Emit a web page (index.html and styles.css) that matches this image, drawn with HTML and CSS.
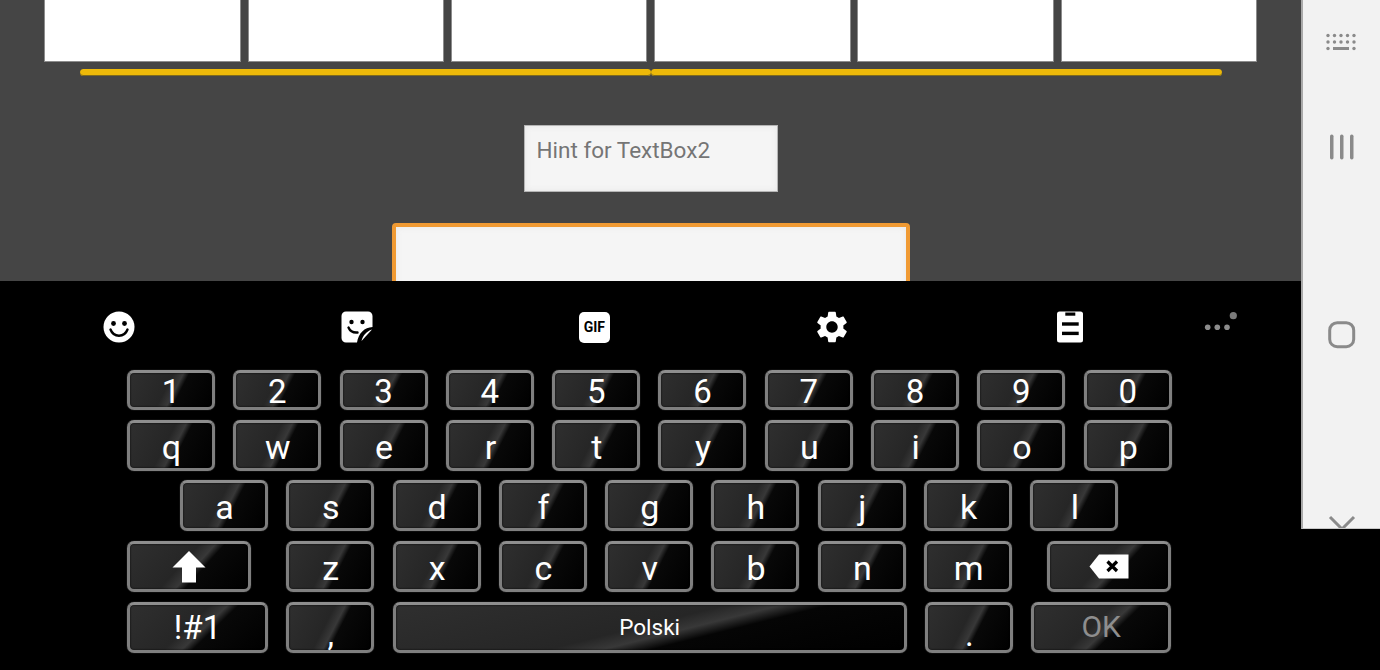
FILE: index.html
```html
<!DOCTYPE html>
<html lang="pl">
<head>
<meta charset="utf-8">
<title>Keyboard</title>
<link rel="stylesheet" href="styles.css">
</head>
<body>
<div class="screen">
  <div class="main">
    <section class="app">
      <div class="tiles">
        <div class="tile"></div><div class="tile"></div><div class="tile"></div>
        <div class="tile"></div><div class="tile"></div><div class="tile"></div>
      </div>
      <div class="slider"><div class="seg"></div><div class="seg"></div></div>
      <div class="hintbox">Hint for TextBox2</div>
      <div class="focusbox"></div>
    </section>
    <section class="keyboard">
      <div class="toolbar">
        <div class="tool">
          <svg width="32" height="32" viewBox="0 0 32 32"><circle cx="16" cy="16" r="15.5" fill="#fff"/><circle cx="10.5" cy="12.5" r="2.4" fill="#000"/><circle cx="21.5" cy="12.5" r="2.4" fill="#000"/><path d="M7.5 18.5c1.6 4.2 4.8 6.2 8.500 6.200s6.900-2 8.500-6.200" fill="none" stroke="#000" stroke-width="2.400" stroke-linecap="round"/></svg>
        </div>
        <div class="tool">
          <svg width="32" height="32" viewBox="0 0 32 32"><path d="M5 0.500h22a4.500 4.500 0 0 1 4.500 4.500v11c-8 .5-14 6-15.500 15.500H5a4.500 4.500 0 0 1-4.500-4.500V5A4.500 4.500 0 0 1 5 .5z" fill="#fff"/><path d="M31 18.500 20.500 30c1-5 4.500-9.500 10.500-11.500z" fill="#fff"/><circle cx="10.500" cy="11" r="2.200" fill="#000"/><circle cx="21.500" cy="11" r="2.200" fill="#000"/><path d="M7.500 16.500c1.500 3.500 4 5.500 9 5" fill="none" stroke="#000" stroke-width="2.400" stroke-linecap="round"/></svg>
        </div>
        <div class="tool"><div class="gif">GIF</div></div>
        <div class="tool">
          <svg width="38" height="38" viewBox="0 0 24 24"><path fill="#fff" d="M19.140 12.940c.04-.3.060-.61.060-.94 0-.32-.020-.64-.070-.94l2.030-1.580c.18-.14.230-.41.120-.61l-1.920-3.320c-.12-.22-.37-.29-.59-.22l-2.390.96c-.5-.38-1.030-.7-1.620-.94l-.36-2.540c-.04-.24-.24-.41-.48-.41h-3.840c-.24 0-.43.170-.47.410l-.36 2.540c-.59.240-1.130.57-1.620.94l-2.390-.96c-.22-.08-.47 0-.59.220L2.740 8.870c-.12.210-.08.470.12.610l2.030 1.580c-.05.3-.09.630-.09.940s.020.640.070.940l-2.030 1.580c-.18.140-.23.410-.12.610l1.920 3.320c.12.220.37.290.59.220l2.390-.96c.5.380 1.030.7 1.620.94l.36 2.540c.05.240.24.410.48.410h3.840c.24 0 .44-.170.47-.41l.36-2.540c.59-.24 1.130-.56 1.620-.94l2.390.96c.22.080.47 0 .59-.22l1.920-3.320c.12-.22.070-.47-.12-.61l-2.010-1.580zM12 15.600c-1.980 0-3.600-1.620-3.600-3.600s1.620-3.600 3.600-3.600 3.600 1.620 3.600 3.600-1.620 3.600-3.600 3.600z"/></svg>
        </div>
        <div class="tool">
          <svg width="26" height="32" viewBox="0 0 26 32"><rect x="0" y="0.500" width="26" height="31" rx="2.500" fill="#fff"/><rect x="8.300" y="1.500" width="10" height="3.200" fill="#000"/><rect x="5" y="11.300" width="16.700" height="3.400" fill="#000"/><rect x="5" y="20.700" width="16.700" height="3.400" fill="#000"/></svg>
        </div>
        <div class="tool">
          <svg width="40" height="30" viewBox="0 0 40 30"><circle cx="10.700" cy="15.300" r="2.800" fill="#8c8c8c"/><circle cx="20.300" cy="15.300" r="2.800" fill="#8c8c8c"/><circle cx="30" cy="15.300" r="2.800" fill="#8c8c8c"/><circle cx="36.300" cy="3.700" r="3.600" fill="#7a7a7a"/></svg>
        </div>
      </div>
      <div class="keys">
        <div class="row row-num">
          <div class="key">1</div><div class="key">2</div><div class="key">3</div><div class="key">4</div><div class="key">5</div><div class="key">6</div><div class="key">7</div><div class="key">8</div><div class="key">9</div><div class="key">0</div>
        </div>
        <div class="row">
          <div class="key">q</div><div class="key">w</div><div class="key">e</div><div class="key">r</div><div class="key">t</div><div class="key">y</div><div class="key">u</div><div class="key">i</div><div class="key">o</div><div class="key">p</div>
        </div>
        <div class="row row-home">
          <div class="key">a</div><div class="key">s</div><div class="key">d</div><div class="key">f</div><div class="key">g</div><div class="key">h</div><div class="key">j</div><div class="key">k</div><div class="key">l</div>
        </div>
        <div class="row">
          <div class="key key-shift">
            <svg width="34" height="33" viewBox="0 0 34 33"><path fill="#fff" d="M17 1 33.500 17.500H24V32.500H10V17.500H.5z"/></svg>
          </div>
          <div class="key">z</div><div class="key">x</div><div class="key">c</div><div class="key">v</div><div class="key">b</div><div class="key">n</div><div class="key">m</div>
          <div class="key key-back">
            <svg width="40" height="25" viewBox="0 0 40 25"><path fill="#fff" d="M10 .5H39.500V24.500H10L.5 12.500z"/><path d="M18.500 7.500l9.500 9.500M28 7.500l-9.500 9.500" stroke="#000" stroke-width="3.200" fill="none"/></svg>
          </div>
        </div>
        <div class="row row-bottom">
          <div class="key key-sym">!#1</div>
          <div class="key key-punct">,</div>
          <div class="key key-space">Polski</div>
          <div class="key key-punct">.</div>
          <div class="key key-ok">OK</div>
        </div>
      </div>
    </section>
  </div>
  <aside class="navbar">
    <svg class="nav-kbd" width="32" height="18" viewBox="0 0 32 18" fill="#8a8a8a"><circle cx="2" cy="2.500" r="1.700"/><circle cx="8.500" cy="2.500" r="1.700"/><circle cx="15" cy="2.500" r="1.700"/><circle cx="21.500" cy="2.500" r="1.700"/><circle cx="28" cy="2.500" r="1.700"/><circle cx="2" cy="9" r="1.700"/><circle cx="8.500" cy="9" r="1.700"/><circle cx="15" cy="9" r="1.700"/><circle cx="21.500" cy="9" r="1.700"/><circle cx="28" cy="9" r="1.700"/><circle cx="2" cy="15.500" r="1.700"/><rect x="7" y="14" width="16" height="3"/><circle cx="28" cy="15.500" r="1.700"/></svg>
    <svg class="nav-lines" width="26" height="26" viewBox="0 0 26 26" fill="#8a8a8a"><rect x="1" y="0.500" width="3.500" height="25" rx="1.700"/><rect x="11" y="0.500" width="3.500" height="25" rx="1.700"/><rect x="21" y="0.500" width="3.500" height="25" rx="1.700"/></svg>
    <svg class="nav-home" width="28" height="28" viewBox="0 0 28 28"><rect x="1.700" y="1.700" width="24" height="24" rx="7.500" fill="none" stroke="#8a8a8a" stroke-width="3"/></svg>
    <svg class="nav-back" width="28" height="16" viewBox="0 0 28 16"><path d="M2 2 14 14 26 2" fill="none" stroke="#8a8a8a" stroke-width="3"/></svg>
  </aside>
</div>
</body>
</html>
```
FILE: styles.css
```css
* { box-sizing: border-box; }
html, body { margin: 0; padding: 0; background: #000; }
body { width: 1380px; height: 670px; overflow: hidden; font-family: Roboto, "Liberation Sans", sans-serif; }

.screen { display: flex; width: 1380px; height: 670px; align-items: flex-start; }
.main { width: 1301px; height: 670px; display: flex; flex-direction: column; flex: none; }

/* App area */
.app { height: 281px; background: #454545; overflow: hidden; display: flex; flex-direction: column; align-items: center; flex: none; }
.tiles { display: flex; gap: 6.700px; width: 100%; padding-left: 44.300px; height: 61.500px; flex: none; }
.tile { width: 196.600px; height: 61.500px; background: #fff; border: 1px solid #8c8c8c; border-top: 0; flex: none; }
.slider { display: flex; width: 1142px; height: 7.500px; margin-top: 7px; flex: none; }
.seg { flex: 1; background: #edb909; border-radius: 4px; box-shadow: inset 0 -1px 0 #7d6a1e; }
.hintbox { width: 254px; height: 67px; margin-top: 49px; flex: none; padding: 8px 12px 0; background: #f5f5f5; border: 1px solid #b5b5b5; box-shadow: inset 0 0 6px #e6e6e6; color: #757575; font-size: 22.500px; line-height: 32px; }
.focusbox { width: 518px; height: 100px; margin-top: 31px; flex: none; background: #f5f5f5; border: 4px solid #f09a33; border-radius: 4px; box-shadow: inset 0 0 6px #e8e8e8; }

/* Keyboard */
.keyboard { height: 389px; background: #000; flex: none; }
.toolbar { display: grid; grid-template-columns: repeat(5, 237.750px) 56px; height: 89px; align-items: center; padding-top: 3px; }
.tool { display: flex; justify-content: center; align-items: center; }
.gif { width: 31px; height: 31px; background: #fff; border-radius: 5px; color: #000; font-size: 14px; font-weight: 700; line-height: 31px; text-align: center; }

.keys { display: flex; flex-direction: column; gap: 9.700px; padding-left: 127px; }
.row { display: flex; gap: 18.300px; height: 51px; }
.row-num { height: 40px; }
.row-home { padding-left: 53px; }

.key { --a: 117deg; width: 88px; flex: none; display: flex; justify-content: center; align-items: center; padding: 3px 0 0 1px; color: #fff; font-size: 34px; line-height: 1; border: 3px solid #7f7f7f; border-top-color: #8e8e8e; border-radius: 7px; background: linear-gradient(var(--a), #2f2f2f 0%, #262626 44%, #383838 54%, #080808 60%, #000 100%); box-shadow: inset 0 0 2px #000, 0 0 1px #777; }
.row-num .key { padding: 2px 0 0; font-size: 33px; }
.key-shift { width: 124px; margin-right: 17px; --a: 132deg; padding: 0; }
.key-back { width: 124px; margin-left: 17px; --a: 132deg; padding: 0; }
.key-sym { width: 141px; --a: 136deg; padding: 0; font-size: 33px; }
.key-punct { padding: 14px 0 0 1px; font-size: 33px; }
.key-space { width: 514px; --a: 166deg; font-size: 22.500px; padding: 0; background: linear-gradient(var(--a), #2f2f2f 0%, #262626 48%, #383838 56%, #050505 63%, #000 100%); }
.key-ok { width: 140px; --a: 136deg; padding: 0; color: #8e8e8e; font-size: 30px; }

/* Navigation bar */
.navbar { width: 79px; height: 529px; background: #f2f2f2; border-left: 2px solid #a9a9a9; overflow: hidden; display: flex; flex-direction: column; align-items: center; flex: none; border-bottom: 1px solid #c8c8c8; }
.nav-kbd { margin-top: 33px; flex: none; }
.nav-lines { margin-top: 83px; flex: none; }
.nav-home { margin-top: 161px; flex: none; }
.nav-back { margin-top: 166px; flex: none; }
```
